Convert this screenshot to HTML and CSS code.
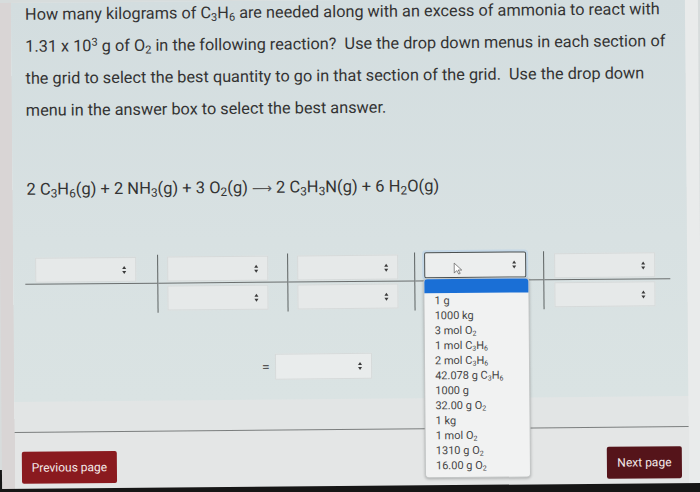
FILE: index.html
```html
<!DOCTYPE html>
<html>
<head>
<meta charset="utf-8">
<link rel="stylesheet" href="styles.css">
</head>
<body>
<div class="screen">
  <div class="panel">
    <p class="question">How many kilograms of C<sub>3</sub>H<sub>6</sub> are needed along with an excess of ammonia to react with<br>1.31 x 10<sup>3</sup> g of O<sub>2</sub> in the following reaction? &nbsp;Use the drop down menus in each section of<br>the grid to select the best quantity to go in that section of the grid. &nbsp;Use the drop down<br>menu in the answer box to select the best answer.</p>
    <p class="equation">2 C<sub>3</sub>H<sub>6</sub>(g) + 2 NH<sub>3</sub>(g) + 3 O<sub>2</sub>(g) <span class="arrow">⟶</span> 2 C<sub>3</sub>H<sub>3</sub>N(g) + 6 H<sub>2</sub>O(g)</p>

    <div class="grid">
      <div class="col">
        <div class="cell top"><div class="box"><span class="spin"></span></div></div>
        <div class="cell"></div>
      </div>
      <div class="col sep">
        <div class="cell top"><div class="box"><span class="spin"></span></div></div>
        <div class="cell"><div class="box"><span class="spin"></span></div></div>
      </div>
      <div class="col sep">
        <div class="cell top"><div class="box"><span class="spin"></span></div></div>
        <div class="cell"><div class="box"><span class="spin"></span></div></div>
      </div>
      <div class="col sep active-col">
        <div class="cell top"><div class="box active"><svg class="cursor" width="10" height="13" viewBox="0 0 10 13"><path d="M1 1 L1 11 L3.5 8.5 L5.5 12 L7 11.3 L5 8 L8.5 8 Z" fill="#fff" stroke="#666" stroke-width="0.8"/></svg><span class="spin"></span></div></div>
        <div class="cell"></div>
        <ul class="menu">
          <li class="sel">&nbsp;</li>
          <li>1 g</li>
          <li>1000 kg</li>
          <li>3 mol O<sub>2</sub></li>
          <li>1 mol C<sub>3</sub>H<sub>6</sub></li>
          <li>2 mol C<sub>3</sub>H<sub>6</sub></li>
          <li>42.078 g C<sub>3</sub>H<sub>6</sub></li>
          <li>1000 g</li>
          <li>32.00 g O<sub>2</sub></li>
          <li>1 kg</li>
          <li>1 mol O<sub>2</sub></li>
          <li>1310 g O<sub>2</sub></li>
          <li>16.00 g O<sub>2</sub></li>
        </ul>
      </div>
      <div class="col sep last">
        <div class="cell top"><div class="box"><span class="spin"></span></div></div>
        <div class="cell"><div class="box"><span class="spin"></span></div></div>
      </div>
    </div>

    <div class="answer">
      <span class="equals">=</span>
      <div class="box answer-box"><span class="spin"></span></div>
    </div>
  </div>

  <div class="band"></div>
  <div class="footer">
    <button class="btn prev">Previous page</button>
    <button class="btn next">Next page</button>
  </div>
</div>
</body>
</html>
```

FILE: styles.css
```css
html, body {
  margin: 0;
  padding: 0;
}
body {
  width: 700px;
  height: 492px;
  overflow: hidden;
  background: linear-gradient(to bottom, #d7dcdc 0, #d7dcdc 470px, #161616 470px);
  font-family: Roboto, "Noto Sans", sans-serif;
}
.screen {
  width: 700px;
  height: 486px;
  background: linear-gradient(to right, #d9d5d5 0, #d9d5d5 13px, #e4e6e6 13px, #e4e6e6 687px, #e9ebeb 687px);
  transform: rotate(-0.5deg);
  transform-origin: 350px 246px;
}
.panel {
  margin-left: 13px;
  width: 660px;
  height: 399px;
  padding-left: 14px;
  background: linear-gradient(to bottom, #d3dddf, #d8e1e2 60%, #dae3e3);
  position: relative;
}
.question {
  margin: 0;
  position: relative;
  top: -4px;
  font-size: 16.3px;
  line-height: 32px;
  color: #333;
  height: 124px;
}
sub, sup {
  font-size: 0.68em;
  line-height: 0;
}
sub { vertical-align: -0.25em; }
sup { vertical-align: 0.5em; }
.equation {
  margin: 47px 0 0 0;
  font-size: 16.5px;
  line-height: 32px;
  color: #333;
}
.equation sub {
  font-size: 0.72em;
}
.arrow {
  font-size: 14px;
  color: #555;
}
.grid {
  margin-top: 50px;
  margin-left: -2px;
  display: grid;
  grid-template-columns: 132px 130px 127px 129px 127px;
}
.col {
  display: flex;
  flex-direction: column;
  position: relative;
}
.col.sep {
  border-left: 1px solid #5d6262;
}
.cell {
  height: 29px;
  padding-left: 9px;
  box-sizing: border-box;
  padding-top: 2px;
}
.cell.top {
  border-bottom: 1px solid #6a6e6e;
}
.col:first-child .cell {
  padding-left: 10px;
}
.box {
  width: 101px;
  height: 25px;
  box-sizing: border-box;
  background: #e6e9e9;
  border: 1px solid #d6dada;
  position: relative;
}
.spin {
  position: absolute;
  right: 9px;
  top: 8px;
  width: 4px;
  height: 8px;
}
.spin::before, .spin::after {
  content: "";
  position: absolute;
  left: 0;
  width: 0;
  height: 0;
  border-left: 2px solid transparent;
  border-right: 2px solid transparent;
}
.spin::before {
  top: 0;
  border-bottom: 3px solid #3a3a3a;
}
.spin::after {
  bottom: 0;
  border-top: 3px solid #3a3a3a;
}
.active-col .cell.top {
  padding-top: 0;
}
.box.active {
  height: 26px;
  width: 102px;
  background: #eceeee;
  border: 1px solid #4b5050;
  border-radius: 2px;
  box-shadow: 0 0 0 2px #c4d7e6;
}
.cursor {
  position: absolute;
  left: 28px;
  top: 9px;
}
.menu {
  position: absolute;
  left: 8px;
  top: 26px;
  width: 104px;
  margin: 0;
  padding: 0 0 4px 0;
  list-style: none;
  background: #f1f2f2;
  border: 1px solid #c3c6c6;
  border-radius: 4px;
  box-shadow: 0 1px 3px rgba(0,0,0,0.25);
  font-size: 11px;
  color: #444;
  z-index: 5;
}
.menu li {
  height: 15px;
  line-height: 15px;
  padding-left: 10px;
}
.menu li.sel {
  background: #1a6fd6;
  height: 14px;
  border-radius: 3px 3px 0 0;
}
.menu sub {
  font-size: 7px;
}
.col.last .cell {
  padding-left: 10px;
}
.answer {
  margin-top: 42px;
  margin-left: 234px;
  display: flex;
  align-items: center;
  gap: 5px;
}
.equals {
  font-size: 14px;
  color: #555;
}
.answer-box {
  width: 97px;
  height: 26px;
  background: #e9ecec;
}
.band {
  margin-left: 13px;
  width: 674px;
  height: 30px;
  background: #e2e5e5;
  border-bottom: 1px solid #7b7e7e;
}
.footer {
  display: flex;
  justify-content: space-between;
  padding: 19px 20px 0 20px;
}
.btn {
  height: 32px;
  border: none;
  border-radius: 2px;
  color: #f4eaea;
  font-family: Roboto, sans-serif;
  font-size: 12px;
  padding: 0;
}
.prev {
  width: 95px;
  background: #8a1a1f;
}
.next {
  width: 75px;
  background: #55141a;
}
```
